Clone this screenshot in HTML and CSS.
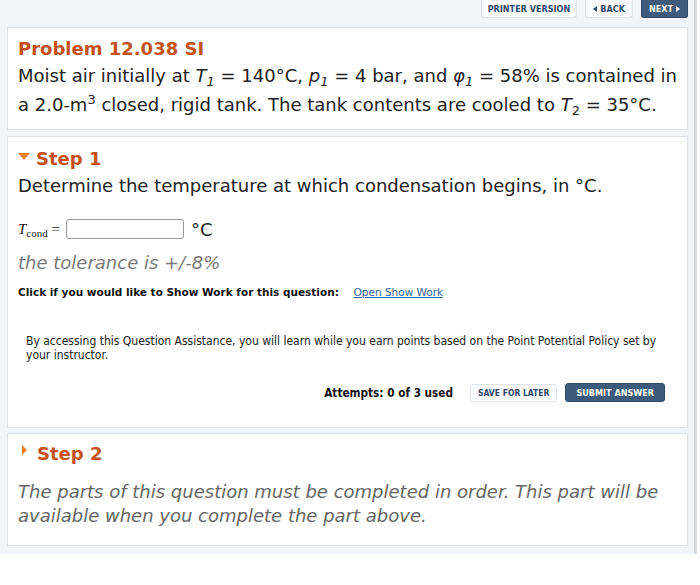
FILE: index.html
```html
<!DOCTYPE html>
<html>
<head>
<meta charset="utf-8">
<link rel="stylesheet" href="styles.css">
</head>
<body>
<div class="page">
  <div class="topbar">
    <button class="btn light">PRINTER VERSION</button>
    <button class="btn light"><span class="tri-l"></span>BACK</button>
    <button class="btn dark">NEXT<span class="tri-r"></span></button>
  </div>
  <div class="card problem">
    <h2 class="title">Problem 12.038 SI</h2>
    <p class="body">Moist air initially at <i>T<sub>1</sub></i> = 140°C, <i>p<sub>1</sub></i> = 4 bar, and <i>φ<sub>1</sub></i> = 58% is contained in a 2.0-m<sup>3</sup> closed, rigid tank. The tank contents are cooled to <i>T</i><sub>2</sub> = 35°C.</p>
  </div>
  <div class="card step1">
    <h2 class="title step"><span class="tri-down"></span>Step 1</h2>
    <p class="body">Determine the temperature at which condensation begins, in °C.</p>
    <div class="answer">
      <span class="math"><i>T</i><sub>cond</sub> =</span>
      <span class="input"></span>
      <span class="unit">°C</span>
    </div>
    <p class="tol">the tolerance is +/-8%</p>
    <p class="showwork">Click if you would like to Show Work for this question: <a class="link">Open Show Work</a></p>
    <p class="assist">By accessing this Question Assistance, you will learn while you earn points based on the Point Potential Policy set by your instructor.</p>
    <div class="actions">
      <span class="attempts">Attempts: 0 of 3 used</span>
      <button class="btn light save">SAVE FOR LATER</button>
      <button class="btn dark submit">SUBMIT ANSWER</button>
    </div>
  </div>
  <div class="card step2">
    <h2 class="title step"><span class="tri-right"></span>Step 2</h2>
    <p class="locked">The parts of this question must be completed in order. This part will be available when you complete the part above.</p>
  </div>
</div>
</body>
</html>
```
FILE: styles.css
```css
html, body { margin: 0; padding: 0; background: #fff; }
body { font-family: "DejaVu Sans", Verdana, sans-serif; color: #222; }
.page {
  width: 697px;
  background: #f1f4f8;
  border-right: 3px solid #d3d6da;
  padding: 0 0 8px 0;
  box-sizing: border-box;
}
.topbar {
  display: flex;
  justify-content: flex-end;
  gap: 8px;
  padding: 0 6px 0 0;
  height: 27px;
  align-items: flex-start;
}
.btn {
  font-family: "DejaVu Sans", Verdana, sans-serif;
  font-weight: bold;
  font-size: 9px;
  font-stretch: condensed;
  border-radius: 3px;
  padding: 0 7px;
  height: 18px;
  line-height: 18px;
  cursor: pointer;
  display: inline-flex;
  align-items: center;
  gap: 3px;
}
.btn.light {
  background: #fafcff;
  color: #2e4a6d;
  border: 1px solid #dfe3e8;
}
.btn.dark {
  background: #3e5b7c;
  color: #fff;
  border: 1px solid #2f4a68;
}
.topbar .btn { border-top: none; border-radius: 0 0 3px 3px; }
.topbar .btn.light:first-child { padding: 0 6px; }
.tri-l { width: 0; height: 0; border-top: 3px solid transparent; border-bottom: 3px solid transparent; border-right: 4px solid #2e4a6d; }
.tri-r { width: 0; height: 0; border-top: 3px solid transparent; border-bottom: 3px solid transparent; border-left: 4px solid #fff; }
.card {
  background: #fff;
  border: 1px solid #dde2e8;
  margin: 0 6px 6px 7px;
  padding: 8px 10px 10px 10px;
}
.title {
  margin: 0;
  font-size: 18px;
  font-weight: bold;
  color: #c4501c;
  line-height: 24px;
}
.problem .title { margin-top: 1px; }
.body {
  margin: 0;
  font-size: 18px;
  line-height: 29px;
  color: #222;
}
sub, sup { font-size: 13px; line-height: 1; position: relative; vertical-align: baseline; }
sub { top: 4px; }
sup { top: -7px; }
.step { display: flex; align-items: center; gap: 6px; margin-top: 2px; }
.tri-down { width: 0; height: 0; border-left: 6px solid transparent; border-right: 6px solid transparent; border-top: 7px solid #f07c22; margin-top: -6px; }
.tri-right { width: 0; height: 0; border-top: 5px solid transparent; border-bottom: 5px solid transparent; border-left: 5px solid #f07c22; margin: -8px 4px 0 4px; }
.step1 { padding-bottom: 25px; margin-bottom: 5px; }
.answer {
  display: flex;
  align-items: center;
  margin-top: 17px;
  height: 24px;
}
.math { font-family: "Liberation Serif", "Times New Roman", serif; font-size: 15px; color: #222; margin-right: 6px; }
.math sub { font-size: 11px; top: 3px; }
.input {
  width: 118px;
  height: 20px;
  border: 1px solid #9a9a9a;
  border-radius: 3px;
  box-sizing: border-box;
  background: #fff;
}
.unit { font-size: 18px; margin-left: 7px; }
.tol {
  margin: 9px 0 0 0;
  font-size: 18px;
  font-style: italic;
  color: #7a7a7a;
  line-height: 26px;
}
.showwork {
  margin: 8px 0 0 0;
  font-size: 10.5px;
  font-weight: bold;
  color: #111;
  line-height: 16px;
}
.link { color: #2f5f9c; text-decoration: underline; font-weight: normal; margin-left: 11px; }
.assist {
  margin: 34px 0 0 0;
  font-size: 12px;
  font-stretch: condensed;
  color: #222;
  line-height: 14px;
  padding: 0 20px 0 8px;
}
.actions {
  display: flex;
  justify-content: flex-end;
  align-items: center;
  gap: 8px;
  margin-top: 21px;
  padding-right: 12px;
}
.attempts { font-size: 11.7px; font-weight: bold; font-stretch: condensed; color: #111; margin-right: 9px; }
.save { height: 18px; font-size: 8.5px; padding: 0 7px; }
.submit { height: 19px; font-size: 9px; padding: 0 10px; }
.step2 { padding-top: 6px; padding-bottom: 17px; margin-bottom: 0; }
.locked {
  margin: 14px 0 0 0;
  font-size: 18px;
  font-style: italic;
  color: #666;
  line-height: 24px;
}
```
